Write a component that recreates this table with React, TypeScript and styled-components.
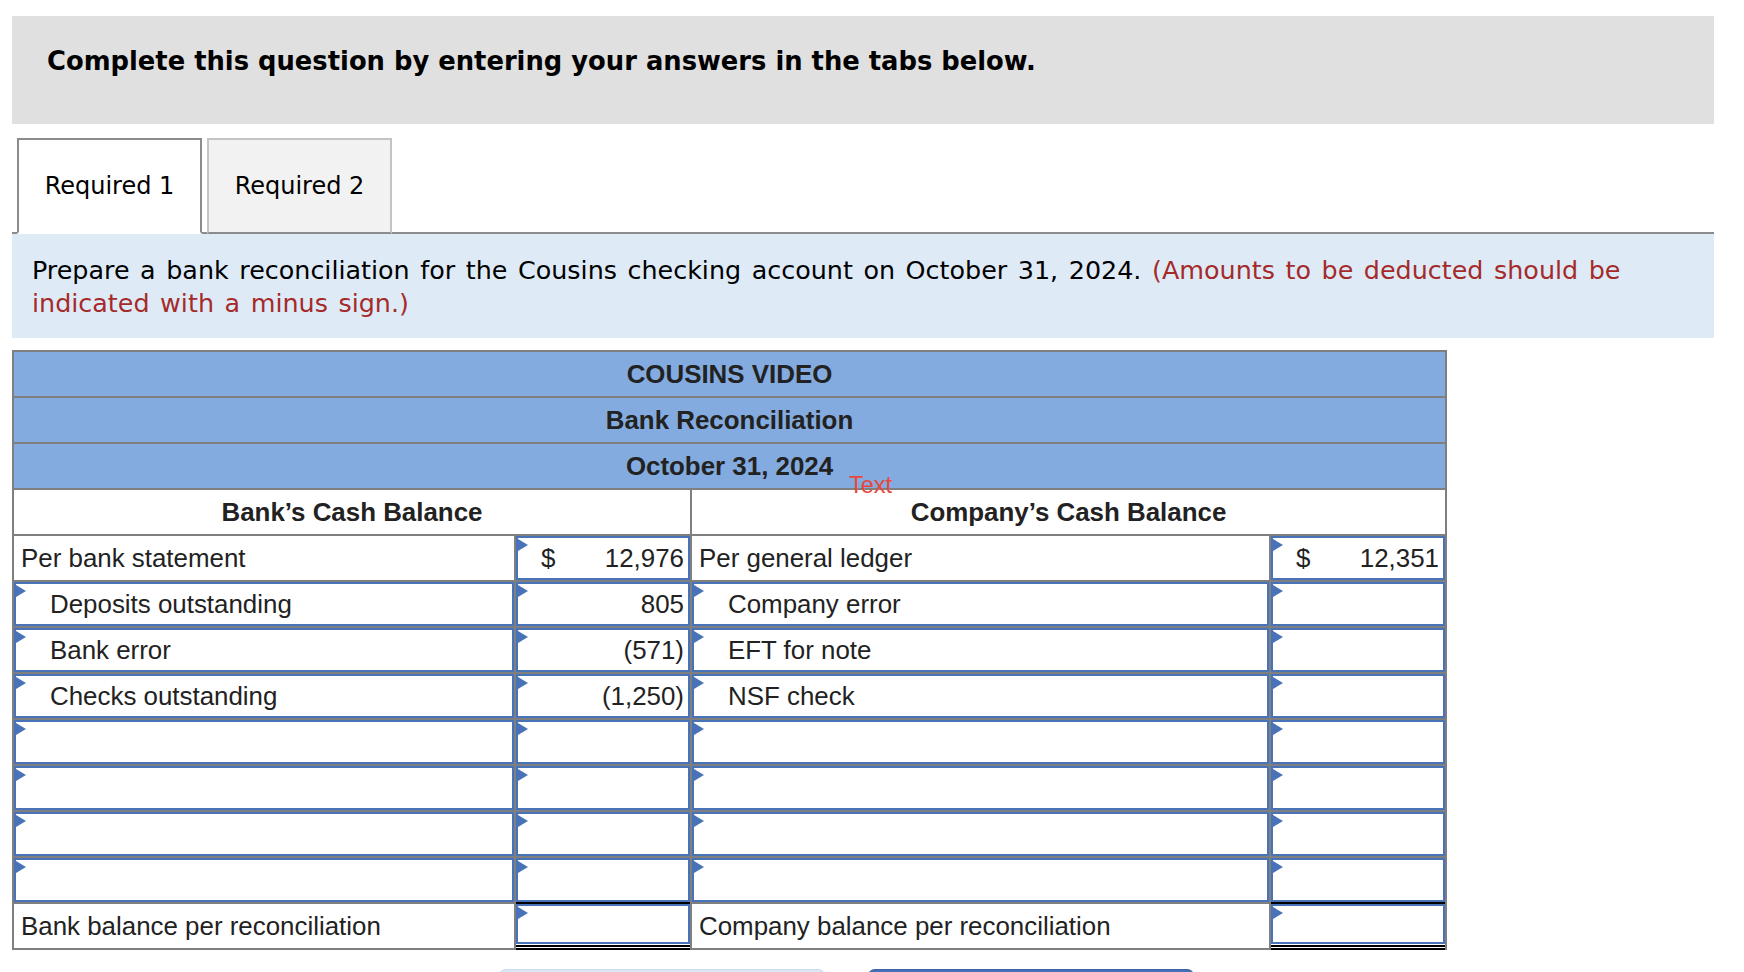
import * as React from 'react';
import styled, {createGlobalStyle, css} from 'styled-components';

const GlobalStyle = createGlobalStyle`
  html, body {
    margin: 0;
    padding: 0;
    background: #fff;
    overflow: hidden;
  }
  body {
    font-family: "DejaVu Sans", Verdana, sans-serif;
    color: #000;
  }
`;

const BLUE = '#4873b9';

const Page = styled.div`
  width: 1702px;
  padding: 16px 0 0 12px;
`;

const Banner = styled.div`
  box-sizing: border-box;
  height: 108px;
  padding: 31px 0 0 35px;
  background: #e0e0e0;
  font-size: 25.8px;
  font-weight: bold;
  line-height: 29px;
`;

const TabBar = styled.div`
  display: flex;
  gap: 5px;
  margin-top: 14px;
  padding-left: 5px;
  border-bottom: 2px solid #8c8c8c;
`;

const Tab = styled.div<{ $active?: boolean }>`
  box-sizing: border-box;
  width: 185px;
  height: 96px;
  margin-bottom: -2px;
  display: flex;
  align-items: center;
  justify-content: center;
  font-size: 24px;
  background: ${p => p.$active ? '#fff' : '#f2f2f2'};
  border: 2px solid ${p => p.$active ? '#8c8c8c' : '#c4c4c4'};
  border-bottom: 2px solid ${p => p.$active ? '#fff' : '#8c8c8c'};
`;

const Instructions = styled.div`
  background: #deebf7;
  padding: 20px 20px 18px 20px;
  font-size: 25.4px;
  line-height: 33px;
  word-spacing: 2.5px;
`;

const Note = styled.span`
  color: #a52a2a;
`;

const TableWrap = styled.div`
  position: relative;
  width: 1435px;
  margin-top: 12px;
  font-family: "Liberation Sans", Arial, sans-serif;
  font-size: 25.9px;
  color: #222;
`;

const Grid = styled.div`
  display: grid;
  grid-template-columns: 500px 174px 577px 174px;
  grid-auto-rows: 44px;
  gap: 2px;
  padding: 2px;
  background: #7f7f7f;
`;

const TitleCell = styled.div`
  grid-column: 1 / -1;
  display: flex;
  align-items: center;
  justify-content: center;
  background: #83abdf;
  font-weight: bold;
`;

const SectionHead = styled.div`
  grid-column: span 2;
  display: flex;
  align-items: center;
  justify-content: center;
  background: #fff;
  font-weight: bold;
`;

const Cell = styled.div<{ $indent?: boolean; $input?: boolean }>`
  position: relative;
  box-sizing: border-box;
  display: flex;
  align-items: center;
  background: #fff;
  white-space: nowrap;
  padding: 0 4px 0 ${p => p.$indent ? 34 : 7}px;
  ${p => p.$input && css`border: 2px solid ${BLUE};`}
`;

const AmountBox = styled.div`
  position: relative;
  box-sizing: border-box;
  flex: 1;
  display: flex;
  align-items: center;
  justify-content: flex-end;
  padding: 0 4px 0 23px;
  background: #fff;
  border: 2px solid ${BLUE};
`;

const AmountCell = styled.div`
  display: flex;
  background: #fff;
`;

const TotalCell = styled.div`
  display: flex;
  flex-direction: column;
  margin: -2px 0;
  padding-bottom: 1px;
  background: #fff;
  border-top: 2px solid #000;
  border-bottom: 5px double #000;
`;

const Dollar = styled.span`
  margin-right: auto;
`;

const Flag = styled.span`
  position: absolute;
  top: 1px;
  left: 0;
  width: 0;
  height: 0;
  border-top: 6px solid transparent;
  border-bottom: 6px solid transparent;
  border-left: 10px solid ${BLUE};
`;

const Stray = styled.span`
  position: absolute;
  left: 837px;
  top: 124px;
  font-size: 23.5px;
  line-height: 1;
  color: #e8483b;
`;

const ButtonRow = styled.div`
  display: flex;
  gap: 41px;
  margin: 19px 0 0 486px;
`;

const NavButton = styled.div<{ $primary?: boolean }>`
  box-sizing: border-box;
  width: 328px;
  height: 48px;
  border-radius: 8px;
  display: flex;
  align-items: center;
  justify-content: center;
  font-size: 20px;
  color: ${p => p.$primary ? '#fff' : '#4873b9'};
  background: ${p => p.$primary ? '#4570b5' : '#dce8f5'};
  border: 1px solid ${p => p.$primary ? '#3c64a6' : '#c9daee'};
`;

type Line = { bank?: string; bankAmt?: string; company?: string; companyAmt?: string };

const lines: Line[] = [
    {bank: 'Deposits outstanding', bankAmt: '805', company: 'Company error'},
    {bank: 'Bank error', bankAmt: '(571)', company: 'EFT for note'},
    {bank: 'Checks outstanding', bankAmt: '(1,250)', company: 'NSF check'},
    {}, {}, {}, {},
];

const Amount: React.FC<{ value?: string, dollar?: boolean }> = ({value, dollar}) => (
    <AmountCell>
        <AmountBox>
            <Flag/>
            {dollar && <Dollar>$</Dollar>}
            {value}
        </AmountBox>
    </AmountCell>
);

const Total: React.FC = () => (
    <TotalCell>
        <AmountBox>
            <Flag/>
        </AmountBox>
    </TotalCell>
);

const App: React.FC = () => {
    return (
        <Page>
            <GlobalStyle/>
            <Banner>Complete this question by entering your answers in the tabs below.</Banner>
            <TabBar>
                <Tab $active>Required 1</Tab>
                <Tab>Required 2</Tab>
            </TabBar>
            <Instructions>
                Prepare a bank reconciliation for the Cousins checking account on October 31, 2024.{' '}
                <Note>(Amounts to be deducted should be indicated with a minus sign.)</Note>
            </Instructions>
            <TableWrap>
                <Grid>
                    <TitleCell>COUSINS VIDEO</TitleCell>
                    <TitleCell>Bank Reconciliation</TitleCell>
                    <TitleCell>October 31, 2024</TitleCell>
                    <SectionHead>Bank’s Cash Balance</SectionHead>
                    <SectionHead>Company’s Cash Balance</SectionHead>

                    <Cell>Per bank statement</Cell>
                    <Amount dollar value="12,976"/>
                    <Cell>Per general ledger</Cell>
                    <Amount dollar value="12,351"/>

                    {lines.map((l, i) => (
                        <React.Fragment key={i}>
                            <Cell $input $indent><Flag/>{l.bank}</Cell>
                            <Amount value={l.bankAmt}/>
                            <Cell $input $indent><Flag/>{l.company}</Cell>
                            <Amount value={l.companyAmt}/>
                        </React.Fragment>
                    ))}

                    <Cell>Bank balance per reconciliation</Cell>
                    <Total/>
                    <Cell>Company balance per reconciliation</Cell>
                    <Total/>
                </Grid>
                <Stray>Text</Stray>
            </TableWrap>
            <ButtonRow>
                <NavButton>‹ Required 1</NavButton>
                <NavButton $primary>Required 2 ›</NavButton>
            </ButtonRow>
        </Page>
    );
};

export default App;
